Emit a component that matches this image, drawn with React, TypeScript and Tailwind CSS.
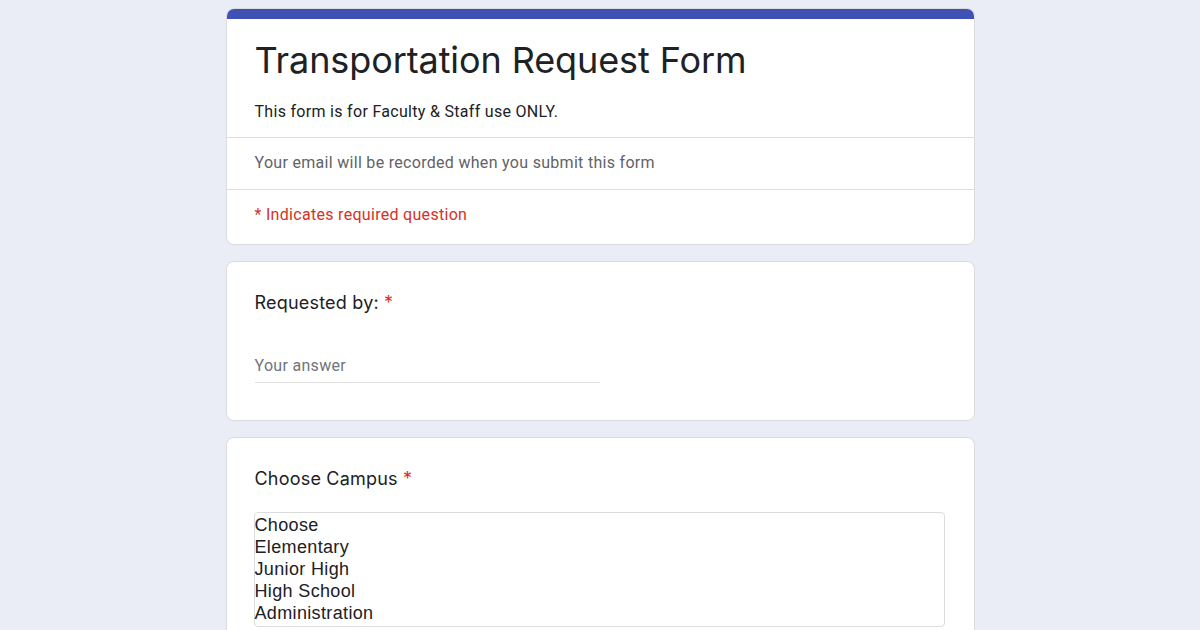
export default function App() {
  return (
    <div className="w-[1200px] h-[630px] bg-[#ebedf6] overflow-hidden">
      <div className="mx-auto w-[749px] pt-[8px] flex flex-col gap-[16px] font-['Roboto',sans-serif]">
        <div className="rounded-[8px] border border-[#dadce0] bg-white overflow-hidden">
          <div className="h-[11px] bg-[#3f51b5] -mx-px -mt-px" />
          <div className="px-[28px] pt-[17px] pb-[15px]">
            <div className="text-[36px] leading-[48px] text-[#202124] font-['Inter',sans-serif] tracking-[-0.1px]">Transportation Request Form</div>
            <div className="mt-[18px] text-[16px] leading-[20px] tracking-[0.3px] text-[#202124]">This form is for Faculty &amp; Staff use ONLY.</div>
          </div>
          <div className="border-t border-[#dadce0] px-[28px] pt-[14px] pb-[15px] text-[16px] leading-[22px] tracking-[0.3px] text-[#5f6368]">Your email will be recorded when you submit this form</div>
          <div className="border-t border-[#dadce0] px-[28px] pt-[14px] pb-[18px] text-[16px] leading-[22px] tracking-[0.3px] text-[#d93025]">* Indicates required question</div>
        </div>
        <div className="rounded-[8px] border border-[#dadce0] bg-white px-[28px] pt-[29px] pb-[37px]">
          <div className="text-[18px] leading-[24px] tracking-[0.2px] text-[#202124] font-['Inter',sans-serif]">Requested by: <span className="text-[#d93025]">*</span></div>
          <div className="mt-[40px] w-[345px] border-b border-[#e0e0e0] pb-[5px] text-[16px] leading-[22px] tracking-[0.3px] text-[#70757a]">Your answer</div>
        </div>
        <div className="rounded-[8px] border border-[#dadce0] bg-white px-[28px] pt-[29px] pb-[24px]">
          <div className="text-[18px] leading-[24px] tracking-[0.2px] text-[#202124] font-['Inter',sans-serif]">Choose Campus <span className="text-[#d93025]">*</span></div>
          <div className="mt-[21px] w-[691px] rounded-[4px] border border-[#dadce0] font-['Liberation_Sans',sans-serif] text-[18px] leading-[22px] tracking-[0.35px] text-[#202124] pt-[1px] pb-[2px] -ml-px">
            <div>Choose</div>
            <div>Elementary</div>
            <div>Junior High</div>
            <div>High School</div>
            <div>Administration</div>
          </div>
        </div>
      </div>
    </div>
  );
}
